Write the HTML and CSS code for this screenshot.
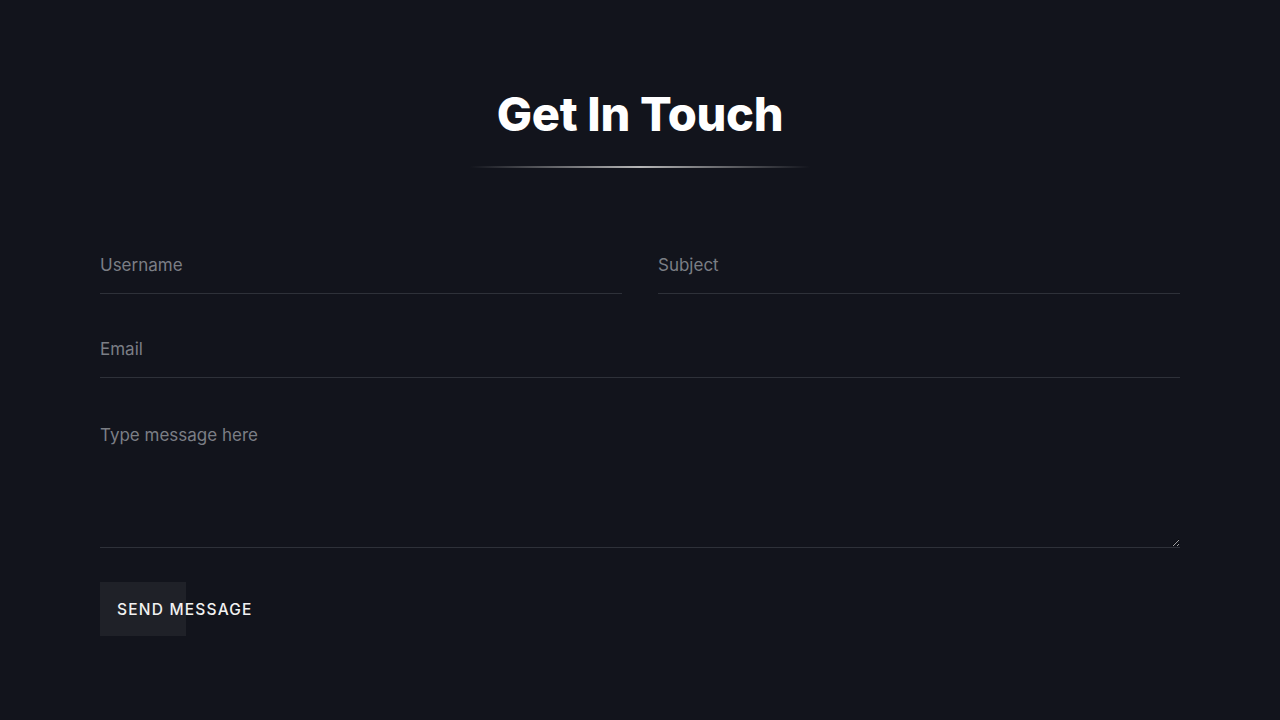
FILE: index.html
```html
<!DOCTYPE html>
<html>
<head>
<meta charset="utf-8">
<link rel="stylesheet" href="styles.css">
</head>
<body>
<section class="contact">
  <h1 class="title">Get In Touch</h1>
  <div class="divider"></div>
  <form class="form">
    <div class="row two">
      <input class="field" type="text" placeholder="Username">
      <input class="field" type="text" placeholder="Subject">
    </div>
    <div class="row">
      <input class="field" type="email" placeholder="Email">
    </div>
    <div class="row last">
      <textarea class="field area" placeholder="Type message here"></textarea>
    </div>
    <button class="btn" type="button"><span class="btn-fill"></span><span class="btn-text">SEND MESSAGE</span></button>
  </form>
</section>
</body>
</html>
```
FILE: styles.css
```css
html, body {
  margin: 0;
  padding: 0;
  background: #12141c;
  height: 100%;
}
body {
  font-family: "Inter", "Open Sans", sans-serif;
  color: #fff;
}
.contact {
  width: 1080px;
  margin: 0 auto;
  padding-top: 86px;
  display: flex;
  flex-direction: column;
  align-items: center;
}
.title {
  margin: 0;
  font-family: "Inter", sans-serif;
  font-weight: 800;
  font-size: 47px;
  line-height: 56px;
  letter-spacing: -0.3px;
  color: #fff;
}
.divider {
  margin-top: 24px;
  width: 340px;
  height: 2px;
  background: linear-gradient(90deg, rgba(255,255,255,0) 0%, rgba(200,200,200,0.9) 50%, rgba(255,255,255,0) 100%);
}
.form {
  width: 100%;
  margin-top: 75px;
  display: flex;
  flex-direction: column;
  align-items: flex-start;
}
.row {
  width: 100%;
  display: flex;
  gap: 36px;
  margin-bottom: 33px;
}
.row.last {
  margin-bottom: 34px;
}
.field {
  flex: 1;
  min-width: 0;
  box-sizing: border-box;
  background: transparent;
  border: none;
  border-bottom: 1px solid #2e3139;
  padding: 12px 0 18px 0;
  font-family: "Inter", sans-serif;
  font-size: 17px;
  line-height: 20px;
  color: #ddd;
  outline: none;
}
.field::placeholder {
  color: #7b7e85;
}
.area {
  height: 137px;
  padding-top: 14px;
  resize: vertical;
}
.btn {
  position: relative;
  background: transparent;
  border: none;
  padding: 0 17px;
  height: 54px;
  font-family: "Inter", sans-serif;
  font-size: 15.5px;
  font-weight: 500;
  letter-spacing: 1.2px;
  color: #f1f1f1;
  cursor: pointer;
}
.btn-fill {
  position: absolute;
  left: 0;
  top: 0;
  bottom: 0;
  width: 86px;
  background: #1f2128;
}
.btn-text {
  position: relative;
}
```
